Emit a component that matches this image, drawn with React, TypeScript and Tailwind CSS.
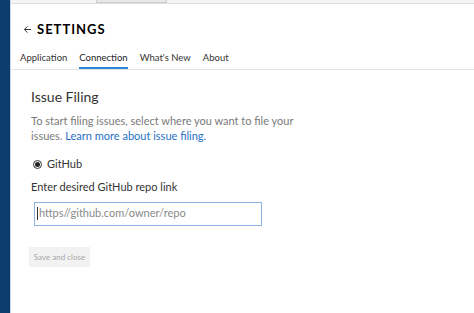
import React from 'react';

const tabs = ['Application', 'Connection', "What's New", 'About'];

export default function App() {
  return (
    <div
      className="flex h-[313px] w-[474px] overflow-hidden bg-white text-[#333]"
      style={{ fontFamily: 'Lato, "Noto Sans", sans-serif' }}
    >
      {/* left rail */}
      <div className="w-[11px] shrink-0 bg-[#0d3b6c] border-r border-[#c9d6e6]" />

      <div className="flex flex-1 flex-col">
        {/* top strip */}
        <div className="relative h-[4px] border-b border-[#dcdcdc] bg-[#f4f4f4]">
          <div className="absolute left-[85px] top-0 h-[3px] w-[71px] border-x border-b border-[#cfcfcf] bg-[#e8e8e8]" />
        </div>

        {/* header */}
        <div className="flex items-center gap-[5px] pl-[12px] pt-[19px]">
          <svg width="9" height="9" viewBox="0 0 10 10" fill="none" stroke="#333" strokeWidth="1.1">
            <path d="M9 5H1.5M5 1.5L1.5 5L5 8.5" />
          </svg>
          <span className="text-[13px] font-bold leading-none tracking-[1px] text-black">SETTINGS</span>
        </div>

        {/* tabs */}
        <div className="mt-[16px] flex gap-[12px] border-b border-[#e3e3e3] pl-[9px] text-[9.5px]">
          {tabs.map((t) => (
            <div
              key={t}
              className={`pb-[3px] leading-[12px] ${t === 'Connection' ? 'border-b-2 border-[#2b88d8] text-[#222]' : 'border-b-2 border-transparent text-[#333]'}`}
            >
              {t}
            </div>
          ))}
        </div>

        {/* body */}
        <div className="flex flex-col pl-[20px] pt-[18px]">
          <div className="text-[14px] leading-[18px] text-[#333]">Issue Filing</div>
          <p className="mt-[7px] w-[275px] text-[11px] leading-[15px] text-[#7a7a7a]">
            To start filing issues, select where you want to file your issues.{' '}
            <span className="text-[#1f6fc5]">Learn more about issue filing.</span>
          </p>

          <label className="mt-[13px] flex items-center gap-[5px] pl-[2px] text-[11px] text-[#333]">
            <span className="flex h-[9px] w-[9px] items-center justify-center rounded-full border border-[#333] bg-white">
              <span className="h-[5px] w-[5px] rounded-full bg-[#222]" />
            </span>
            GitHub
          </label>

          <div className="mt-[6px] text-[11px] leading-[15px] text-[#333]">Enter desired GitHub repo link</div>

          <div className="ml-[3px] mt-[8px] flex h-[24px] w-[228px] items-center border border-[#8eb1df] pl-[2px] text-[11px] text-[#8a8a8a]">
            <span className="mr-[1px] h-[13px] w-px bg-[#333]" />
            https//github.com/owner/repo
          </div>

          <div className="mt-[21px] flex h-[20px] w-[61px] items-center justify-center bg-[#f2f2f2] text-[8px] text-[#a8a8a8] -ml-[2px]">
            Save and close
          </div>
        </div>
      </div>
    </div>
  );
}
